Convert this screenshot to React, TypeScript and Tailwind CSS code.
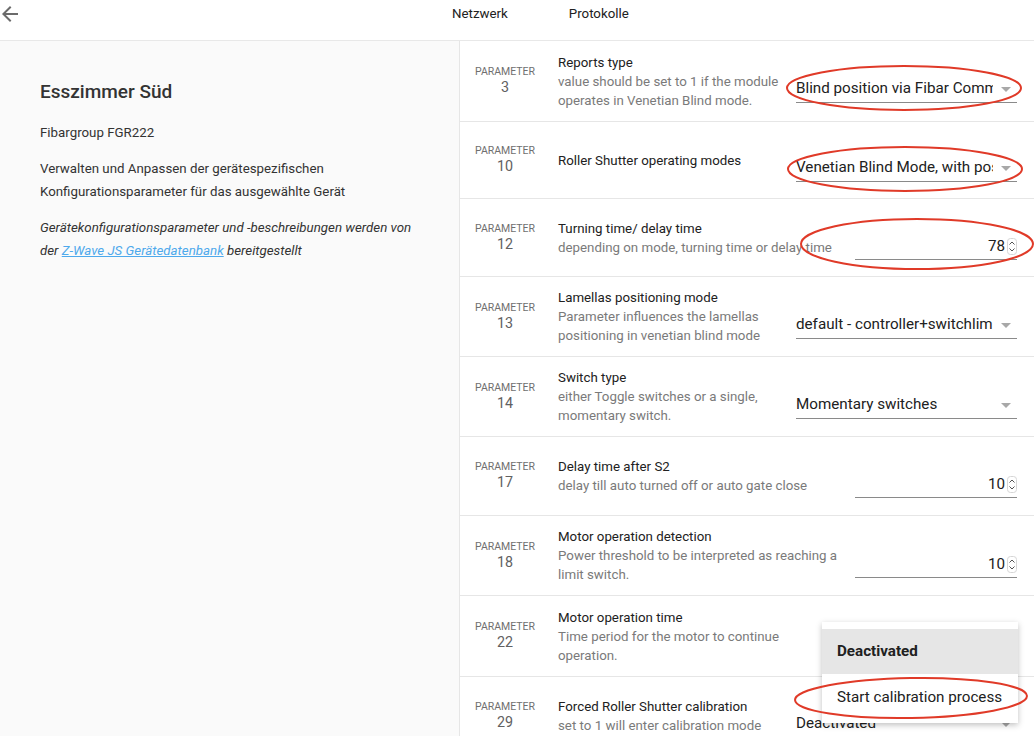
import React from 'react';

type Param = {
  id: number;
  title: string;
  desc?: string;
  kind: 'select' | 'number';
  value: string;
  h: string;
  textW?: string;
};

const params: Param[] = [
  { id: 3, title: 'Reports type', desc: 'value should be set to 1 if the module operates in Venetian Blind mode.', kind: 'select', value: 'Blind position via Fibar Command Class', h: 'h-[81px]' },
  { id: 10, title: 'Roller Shutter operating modes', kind: 'select', value: 'Venetian Blind Mode, with positioning', h: 'h-[77px]' },
  { id: 12, title: 'Turning time/ delay time', desc: 'depending on mode, turning time or delay time', kind: 'number', value: '78', h: 'h-[78px]' },
  { id: 13, title: 'Lamellas positioning mode', desc: 'Parameter influences the lamellas positioning in venetian blind mode', kind: 'select', value: 'default - controller+switchlimit', h: 'h-[80px]' },
  { id: 14, title: 'Switch type', desc: 'either Toggle switches or a single, momentary switch.', kind: 'select', value: 'Momentary switches', h: 'h-[80px]' },
  { id: 17, title: 'Delay time after S2', desc: 'delay till auto turned off or auto gate close', kind: 'number', value: '10', h: 'h-[79px]' },
  { id: 18, title: 'Motor operation detection', desc: 'Power threshold to be interpreted as reaching a limit switch.', kind: 'number', value: '10', h: 'h-[80px]' },
  { id: 22, title: 'Motor operation time', desc: 'Time period for the motor to continue operation.', kind: 'number', value: '10', h: 'h-[81px]', textW: 'max-w-[226px]' },
  { id: 29, title: 'Forced Roller Shutter calibration', desc: 'set to 1 will enter calibration mode', kind: 'select', value: 'Deactivated', h: 'h-[78px]' },
];

const Spinner = () => (
  <svg width="10" height="17" viewBox="0 0 10 17" className="ml-[2px] mb-[1px]">
    <rect x="0.5" y="0.5" width="9" height="16" rx="3" fill="none" stroke="#d6d6d6" />
    <path d="M2.5 6.5 L5 4 L7.5 6.5" fill="none" stroke="#555" strokeWidth="1" />
    <path d="M2.5 10.5 L5 13 L7.5 10.5" fill="none" stroke="#555" strokeWidth="1" />
  </svg>
);

const Control = ({ p }: { p: Param }) => {
  if (p.kind === 'number') {
    return (
      <div className="w-[162px] h-[44px] flex items-end justify-end border-b border-[#8a8a8a] pb-[3px] shrink-0">
        <span className="text-[15.2px] leading-[19px] text-[#212121]">{p.value}</span>
        <Spinner />
      </div>
    );
  }
  return (
    <div className="w-[221px] h-[44px] flex items-end border-b border-[#8a8a8a] pb-[4px] shrink-0">
      <span className="flex-1 overflow-hidden whitespace-nowrap text-[15.2px] leading-[19px] text-[#212121] mr-[8px]">{p.value}</span>
      <svg width="10" height="5" viewBox="0 0 10 5" className="mb-[6px] mr-[6px]">
        <path d="M0 0 L10 0 L5 5 Z" fill="#a8a8a8" />
      </svg>
    </div>
  );
};

export default function App() {
  return (
    <div className="relative w-[1034px] h-[736px] overflow-hidden bg-white font-['Roboto',_sans-serif] text-[#212121]">
      <header className="h-[41px] border-b border-[#e8e8e8] flex items-start">
        <div className="h-[28px] flex items-center">
          <svg width="24" height="24" viewBox="0 0 24 24" className="ml-[-2px]">
            <path d="M20 11H7.83l5.59-5.59L12 4l-8 8 8 8 1.41-1.41L7.83 13H20v-2z" fill="#6b6b6b" />
          </svg>
          <nav className="flex gap-[61px] ml-[430px] text-[13.3px]">
            <span>Netzwerk</span>
            <span>Protokolle</span>
          </nav>
        </div>
      </header>

      <div className="flex h-[695px]">
        <aside className="w-[460px] shrink-0 bg-[#fafafa] border-r border-[#e6e6e6] px-[40px] pt-[37px] text-[#333]">
          <h1 className="text-[19px] leading-[28px] font-medium text-[#333]">Esszimmer Süd</h1>
          <p className="mt-[15px] text-[13.3px] leading-[23px]">Fibargroup FGR222</p>
          <p className="mt-[13px] text-[13.3px] leading-[23px]">
            Verwalten und Anpassen der gerätespezifischen Konfigurationsparameter für das ausgewählte Gerät
          </p>
          <p className="mt-[13px] text-[13.3px] leading-[23px] italic">
            Gerätekonfigurationsparameter und -beschreibungen werden von der{' '}
            <a className="text-[#4ea9ec] underline">Z-Wave JS Gerätedatenbank</a> bereitgestellt
          </p>
        </aside>

        <main className="flex-1 flex flex-col">
          {params.map((p) => (
            <div key={p.id} className={`${p.h} shrink-0 flex items-center border-b border-[#e6e6e6] pr-[17px]`}>
              <div className="w-[90px] shrink-0 flex flex-col items-center text-[#6f6f6f]">
                <span className="text-[10.5px] leading-[13px] uppercase">Parameter</span>
                <span className="text-[14.3px] leading-[19px] text-[#616161]">{p.id}</span>
              </div>
              <div className="flex-1 ml-[8px] mr-[12px] text-[13.3px] leading-[19px]">
                <div className={p.textW}>
                  <div className="text-[#212121]">{p.title}</div>
                  {p.desc && <div className="text-[#7a7a7a]">{p.desc}</div>}
                </div>
              </div>
              <Control p={p} />
            </div>
          ))}
        </main>
      </div>

      <div className="absolute left-[822px] top-[622px] w-[196px] bg-white shadow-[0_2px_6px_rgba(0,0,0,0.25)] pt-[7px] pb-[3px] text-[15.2px] whitespace-nowrap">
        <div className="h-[45px] bg-[#e6e6e6] px-[15px] flex items-center font-bold text-[#212121]">Deactivated</div>
        <div className="h-[46px] px-[15px] flex items-center text-[#212121]">Start calibration process</div>
      </div>

      <svg className="absolute inset-0 pointer-events-none" width="1034" height="736">
        <g fill="none" stroke="#e03a28" strokeWidth="2">
          <ellipse cx="904" cy="88" rx="117" ry="22" />
          <ellipse cx="905" cy="169" rx="117" ry="22" />
          <ellipse cx="917" cy="244" rx="116" ry="25" />
          <ellipse cx="911" cy="698" rx="116" ry="20" transform="rotate(-1 911 698)" />
        </g>
      </svg>
    </div>
  );
}
